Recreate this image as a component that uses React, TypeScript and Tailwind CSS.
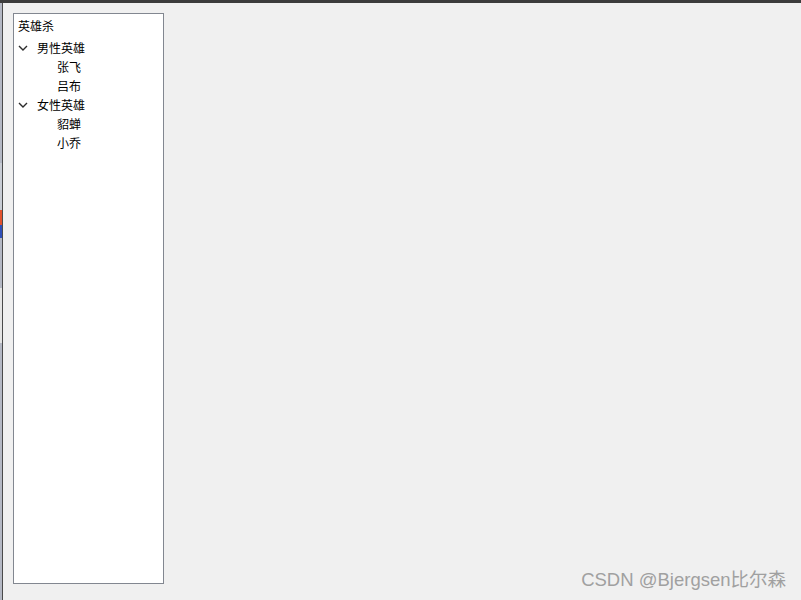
import React from 'react'

type Node = { label: string; children?: Node[] }

const TREE: Node[] = [
  { label: '男性英雄', children: [{ label: '张飞' }, { label: '吕布' }] },
  { label: '女性英雄', children: [{ label: '貂蝉' }, { label: '小乔' }] },
]

function Chevron() {
  return (
    <svg width="10" height="6" viewBox="0 0 10 6" className="shrink-0">
      <path d="M1 1 L5 5 L9 1" fill="none" stroke="#2b2b2b" strokeWidth="1.4" />
    </svg>
  )
}

export default function App() {
  return (
    <div
      className="flex h-[600px] w-[801px] flex-col bg-[#f0f0f0] text-[12px] text-black"
      style={{ fontFamily: '"Noto Sans CJK SC", "Noto Sans", sans-serif' }}
    >
      <div className="h-[3px] w-full bg-[#3c3c3c]" />
      <div className="flex flex-1">
        {/* left edge of a window behind */}
        <div className="flex w-[3px] flex-col">
          <div className="flex flex-1">
            <div className="flex w-[2px] flex-col bg-[#b4b8c4]">
              <div className="h-[160px]" />
              <div className="h-[47px] bg-[#c8ccd4]" />
              <div className="h-[15px] bg-[#e2522e]" />
              <div className="h-[13px] bg-[#2f4fb8]" />
              <div className="h-[50px]" />
              <div className="h-[55px] bg-[#e4e4e4]" />
              <div className="flex-1" />
            </div>
            <div className="w-[1px] bg-[#4a4a4a]" />
          </div>
        </div>
        <div className="flex flex-1 flex-col pl-[10px] pt-[10px]">
          <div className="flex h-[571px] w-[151px] flex-col border border-[#828790] bg-white">
            <div className="flex flex-col pt-[2px]">
              <div className="flex h-[19px] items-center pl-[4px]">英雄杀</div>
              <div className="h-[3px]" />
              {TREE.map((group) => (
                <div key={group.label} className="flex flex-col">
                  <div className="flex h-[19px] items-center pl-[4px]">
                    <Chevron />
                    <span className="ml-[9px]">{group.label}</span>
                  </div>
                  {group.children?.map((child) => (
                    <div key={child.label} className="flex h-[19px] items-center pl-[43px]">
                      {child.label}
                    </div>
                  ))}
                </div>
              ))}
            </div>
          </div>
          <div className="flex flex-1 items-start justify-end pr-[15px]">
            <span
              className="-mt-[18px] text-[18.5px] text-[#a0a0a0]"
              style={{ fontFamily: 'Arial, "Liberation Sans", "Noto Sans CJK SC", sans-serif' }}
            >
              CSDN @Bjergsen比尔森
            </span>
          </div>
        </div>
      </div>
    </div>
  )
}
